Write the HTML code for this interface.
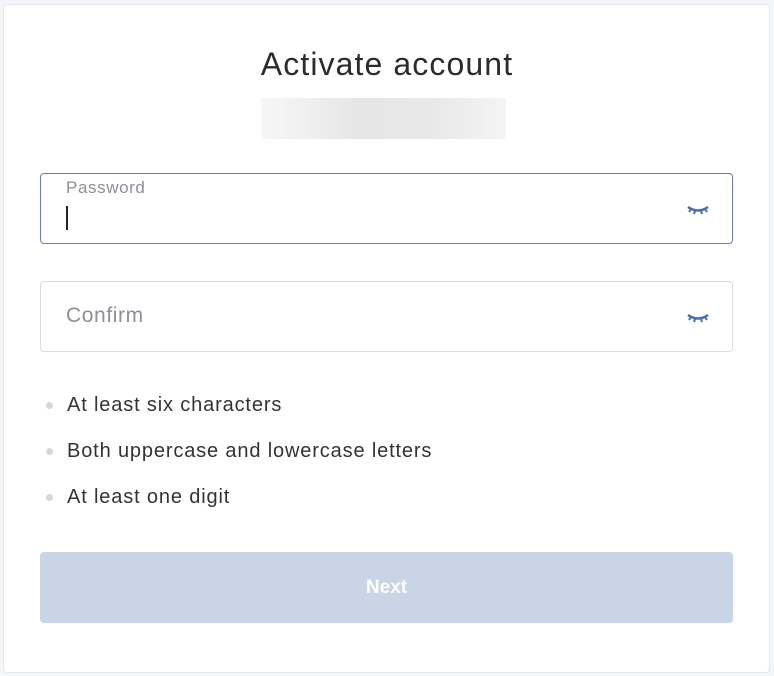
<!DOCTYPE html>
<html><head><style>
body{margin:0;width:774px;height:676px;background:#f3f5f9;font-family:"Liberation Sans",sans-serif;position:relative;overflow:hidden}
.card{position:absolute;left:3px;top:4px;width:765px;height:667px;background:#fff;border:1px solid #e3e7ef;border-radius:4px}
h1{position:absolute;left:0;width:774px;top:46px;margin:0;text-align:center;font-weight:normal;font-size:32px;letter-spacing:1.1px;color:#2b2b2b}
.blur{position:absolute;left:261px;top:98px;width:245px;height:41px;background:linear-gradient(90deg,#f7f7f7,#e6e6e6 40%,#e8e8e8 70%,#f5f5f5)}
.inp{position:absolute;left:40px;width:691px;height:69px;border:1px solid #d7dbe3;border-radius:4px;box-sizing:border-box}
.lab{position:absolute;left:25px;color:#8b8f96}
.eye{position:absolute;left:645px;width:24px;height:12px}
.li{position:absolute;left:46px;font-size:20px;letter-spacing:0.85px;color:#333}
.li:before{content:"";position:absolute;left:0;top:8px;width:7px;height:7px;border-radius:50%;background:#d4d7dc}
.li span{margin-left:21px}
.btn{position:absolute;left:40px;top:552px;width:693px;height:71px;background:#c9d5e6;border-radius:4px;color:#fff;font-weight:bold;font-size:19px;text-align:center;line-height:71px}
</style></head><body>
<div class="card"></div>
<h1>Activate account</h1>
<div class="blur"></div>
<div class="inp" style="top:173px;border-color:#6a80bd;width:693px;height:71px">
<div class="lab" style="top:4px;font-size:17px;letter-spacing:0.6px">Password</div>
<div style="position:absolute;left:25px;top:32px;width:2px;height:24px;background:#222"></div>
<svg class="eye" style="top:30px" viewBox="0 0 24 12"><path d="M2 3Q12 10 22 3" stroke="#4a6bb5" stroke-width="2.5" fill="none"/><path d="M5 5l-2 3M9 7l-1 3M15 7l1 3M19 5l2 3" stroke="#4a6bb5" stroke-width="2"/></svg>
</div>
<div class="inp" style="top:281px;width:693px;height:71px">
<div class="lab" style="top:22px;font-size:21px;letter-spacing:0.6px">Confirm</div>
<svg class="eye" style="top:30px" viewBox="0 0 24 12"><path d="M2 3Q12 10 22 3" stroke="#4a6bb5" stroke-width="2.5" fill="none"/><path d="M5 5l-2 3M9 7l-1 3M15 7l1 3M19 5l2 3" stroke="#4a6bb5" stroke-width="2"/></svg>
</div>
<div class="li" style="top:394px"><span>At least six characters</span></div>
<div class="li" style="top:440px"><span>Both uppercase and lowercase letters</span></div>
<div class="li" style="top:486px"><span>At least one digit</span></div>
<div class="btn">Next</div>
</body></html>
